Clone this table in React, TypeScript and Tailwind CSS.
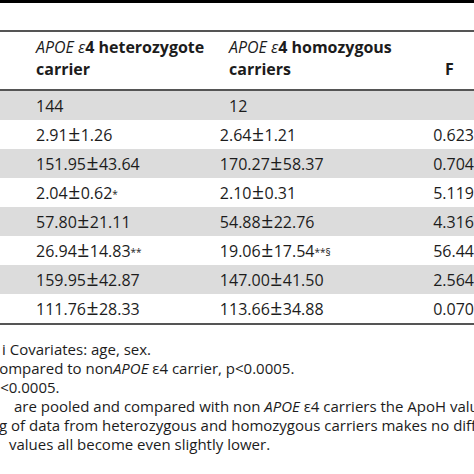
const rows: [string, string, string, string, string, boolean][] = [
  ['144', '', '12', '', '', true],
  ['2.91±1.26', '', '2.64±1.21', '', '0.623', false],
  ['151.95±43.64', '', '170.27±58.37', '', '0.704', true],
  ['2.04±0.62', '*', '2.10±0.31', '', '5.119', false],
  ['57.80±21.11', '', '54.88±22.76', '', '4.316', true],
  ['26.94±14.83', '**', '19.06±17.54', '**§', '56.44', false],
  ['159.95±42.87', '', '147.00±41.50', '', '2.564', true],
  ['111.76±28.33', '', '113.66±34.88', '', '0.070', false],
];

function Cell({ v, sup }: { v: string; sup: string }) {
  const parts = v.split('±');
  return (
    <span>
      {parts[0]}
      {parts.length > 1 && (
        <>
          <span className="text-[21px] leading-none mx-[0.5px]">±</span>
          {parts[1]}
        </>
      )}
      {sup && <sup className="text-[10px] relative top-[-1px]">{sup}</sup>}
    </span>
  );
}

export default function App() {
  return (
    <div
      className="w-[474px] h-[474px] overflow-hidden bg-white text-[#1c1c1c]"
      style={{ fontFamily: '"Open Sans", "Noto Sans", sans-serif' }}
    >
      <div className="h-[3px] bg-black" />
      <div className="h-[27px]" />
      <div className="h-[2px] bg-[#555]" />
      <div className="flex h-[57px] pt-[4px] text-[16px] font-bold leading-[22px] whitespace-nowrap">
        <div className="w-[229px] pl-[36px]">
          <span className="italic font-normal">APOE </span>
          <span className="italic font-normal">ε</span>4 heterozygote
          <br />
          carrier
        </div>
        <div className="w-[216px]">
          <span className="italic font-normal">APOE </span>
          <span className="italic font-normal">ε</span>4 homozygous
          <br />
          carriers
        </div>
        <div className="pt-[22px]">F</div>
      </div>
      <div className="h-[2px] bg-[#555]" />
      {rows.map((r, i) => (
        <div
          key={i}
          className={`flex h-[29px] items-center text-[16px] whitespace-nowrap ${r[5] ? 'bg-[#dcdcdc]' : 'bg-white'}`}
        >
          <div className="w-[229px] pl-[36px]">
            <Cell v={r[0]} sup={r[1]} />
          </div>
          <div className="w-[224px]">
            <Cell v={r[2]} sup={r[3]} />
          </div>
          <div>{r[4]}</div>
        </div>
      ))}
      <div className="h-[2px] bg-[#555]" />
      <div className="pt-[15px] text-[15px] leading-[19px] whitespace-nowrap">
        <div className="pl-[2px]">i Covariates: age, sex.</div>
        <div className="ml-[-8px]">
          compared to non<span className="italic">APOE</span> ε4 carrier, p&lt;0.0005.
        </div>
        <div className="ml-[-9px]">p&lt;0.0005.</div>
        <div className="pl-[14px]">
          are pooled and compared with non <span className="italic">APOE</span> ε4 carriers the ApoH values
        </div>
        <div className="ml-[-1px]">g of data from heterozygous and homozygous carriers makes no difference</div>
        <div className="pl-[9px]">values all become even slightly lower.</div>
      </div>
    </div>
  );
}
